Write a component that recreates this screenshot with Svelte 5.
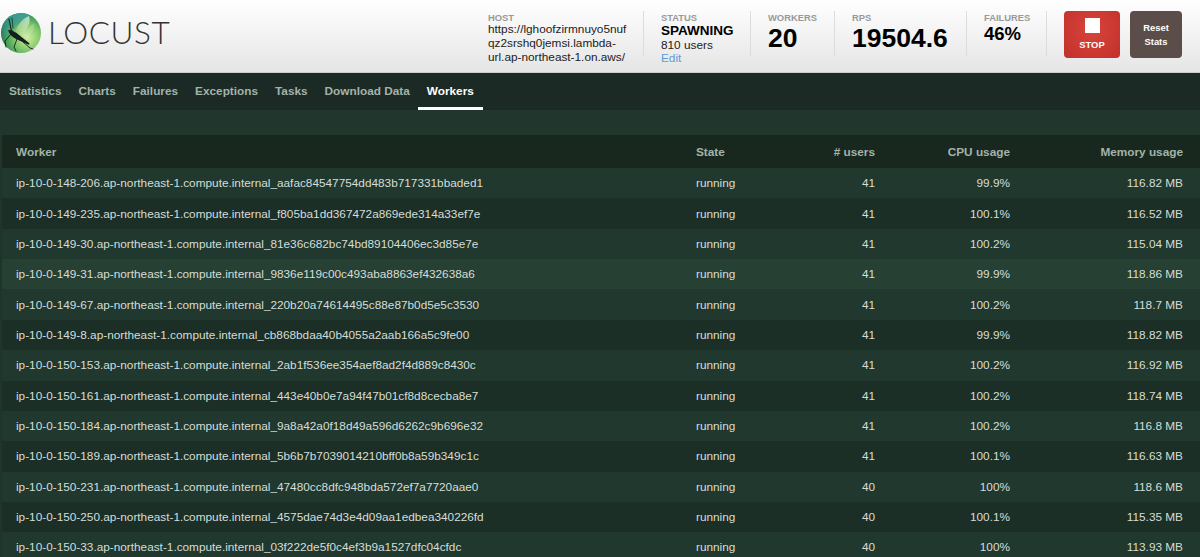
<script>
  const tabs = ["Statistics", "Charts", "Failures", "Exceptions", "Tasks", "Download Data", "Workers"]
  const active = "Workers"

  const workers = [
    ["ip-10-0-148-206.ap-northeast-1.compute.internal_aafac84547754dd483b717331bbaded1", 41, "99.9%", "116.82 MB"],
    ["ip-10-0-149-235.ap-northeast-1.compute.internal_f805ba1dd367472a869ede314a33ef7e", 41, "100.1%", "116.52 MB"],
    ["ip-10-0-149-30.ap-northeast-1.compute.internal_81e36c682bc74bd89104406ec3d85e7e", 41, "100.2%", "115.04 MB"],
    ["ip-10-0-149-31.ap-northeast-1.compute.internal_9836e119c00c493aba8863ef432638a6", 41, "99.9%", "118.86 MB"],
    ["ip-10-0-149-67.ap-northeast-1.compute.internal_220b20a74614495c88e87b0d5e5c3530", 41, "100.2%", "118.7 MB"],
    ["ip-10-0-149-8.ap-northeast-1.compute.internal_cb868bdaa40b4055a2aab166a5c9fe00", 41, "99.9%", "118.82 MB"],
    ["ip-10-0-150-153.ap-northeast-1.compute.internal_2ab1f536ee354aef8ad2f4d889c8430c", 41, "100.2%", "116.92 MB"],
    ["ip-10-0-150-161.ap-northeast-1.compute.internal_443e40b0e7a94f47b01cf8d8cecba8e7", 41, "100.2%", "118.74 MB"],
    ["ip-10-0-150-184.ap-northeast-1.compute.internal_9a8a42a0f18d49a596d6262c9b696e32", 41, "100.2%", "116.8 MB"],
    ["ip-10-0-150-189.ap-northeast-1.compute.internal_5b6b7b7039014210bff0b8a59b349c1c", 41, "100.1%", "116.63 MB"],
    ["ip-10-0-150-231.ap-northeast-1.compute.internal_47480cc8dfc948bda572ef7a7720aae0", 40, "100%", "118.6 MB"],
    ["ip-10-0-150-250.ap-northeast-1.compute.internal_4575dae74d3e4d09aa1edbea340226fd", 40, "100.1%", "115.35 MB"],
    ["ip-10-0-150-33.ap-northeast-1.compute.internal_03f222de5f0c4ef3b9a1527dfc04cfdc", 40, "100%", "113.93 MB"]
  ]
</script>

<div class="page">
  <header class="top">
    <div class="brand">
      <svg class="logo" viewBox="0 0 40 40" width="40" height="40" aria-hidden="true">
        <defs>
          <radialGradient id="orb" cx="0.66" cy="0.62" r="0.68">
            <stop offset="0" stop-color="#cfeea0"/>
            <stop offset="0.45" stop-color="#86c96c"/>
            <stop offset="0.8" stop-color="#3f9a58"/>
            <stop offset="1" stop-color="#1d6448"/>
          </radialGradient>
          <linearGradient id="wing" x1="0.7" y1="0" x2="0.3" y2="1">
            <stop offset="0" stop-color="#fff" stop-opacity="0.6"/>
            <stop offset="1" stop-color="#fff" stop-opacity="0.08"/>
          </linearGradient>
          <linearGradient id="cap" x1="0" y1="0" x2="0" y2="1">
            <stop offset="0" stop-color="#3d9f96"/>
            <stop offset="1" stop-color="#3d9f96" stop-opacity="0"/>
          </linearGradient>
        </defs>
        <circle cx="20" cy="20" r="20" fill="url(#orb)"/>
        <path d="M20 0A20 20 0 0 0 0 20C0 24 1 27 3 30C8 20 16 10 30 3C27 1 24 0 20 0Z" fill="url(#cap)"/>
        <path d="M14 20C16 12 21 6 28 3C30 9 27 17 18 23Z" fill="url(#wing)"/>
        <path d="M19 23C23 18 29 13 33 10C35 16 30 23 22 25Z" fill="#fff" opacity="0.16"/>
        <g fill="none" stroke="#14201a" stroke-linecap="round">
          <path d="M8 6L10 16L12 20" stroke-width="1.100"/>
          <path d="M11 5L12 15" stroke-width="0.700"/>
          <path d="M10 21L4 28L5 34" stroke-width="1"/>
          <path d="M16 26L13 34L15 38" stroke-width="0.900"/>
          <path d="M22 29L29 35L32 36" stroke-width="0.900"/>
        </g>
        <path d="M7 17C11 17 15 19 18 22L28 30C29 31 28 32 27 31.500L15 26C11 24 8 21 7 17Z" fill="#14201a"/>
      </svg>
      <span class="wordmark">LOCUST</span>
    </div>

    <div class="stats">
      <div class="stat host">
        <div class="label">HOST</div>
        <div class="hosturl">https://lghoofzirmnuyo5nuf<br>qz2srshq0jemsi.lambda-<br>url.ap-northeast-1.on.aws/</div>
      </div>
      <div class="stat status">
        <div class="label">STATUS</div>
        <div class="state">SPAWNING</div>
        <div class="users">810 users</div>
        <a class="edit" href="#edit">Edit</a>
      </div>
      <div class="stat workers">
        <div class="label">WORKERS</div>
        <div class="big">20</div>
      </div>
      <div class="stat rps">
        <div class="label">RPS</div>
        <div class="big">19504.6</div>
      </div>
      <div class="stat failures">
        <div class="label">FAILURES</div>
        <div class="mid">46%</div>
      </div>
      <div class="actions">
        <button class="stop"><span class="square"></span>STOP</button>
        <button class="reset">Reset<br>Stats</button>
      </div>
    </div>
  </header>

  <nav class="tabs">
    {#each tabs as tab}
      <a href="#{tab}" class:active={tab === active}>{tab}</a>
    {/each}
  </nav>

  <div class="band"></div>

  <div class="wrap">
    <table>
      <thead>
        <tr>
          <th class="name">Worker</th>
          <th class="state-col">State</th>
          <th class="num users-col"># users</th>
          <th class="num cpu-col">CPU usage</th>
          <th class="num mem-col">Memory usage</th>
        </tr>
      </thead>
      <tbody>
        {#each workers as w, i}
          <tr class:hover={i === 3}>
            <td class="name">{w[0]}</td>
            <td>running</td>
            <td class="num">{w[1]}</td>
            <td class="num">{w[2]}</td>
            <td class="num">{w[3]}</td>
          </tr>
        {/each}
      </tbody>
    </table>
  </div>
</div>

<style>
  :global(body) {
    margin: 0;
    background: #1f342b;
    overflow: hidden;
  }

  .page {
    height: 557px;
    overflow: hidden;
    font-family: "Liberation Sans", Arial, sans-serif;
    background: #1f342b;
  }

  .top {
    height: 72px;
    display: flex;
    justify-content: space-between;
    background: linear-gradient(#ffffff, #e5e5e5);
    border-bottom: 1px solid #c9cdcb;
  }

  .brand {
    display: flex;
    align-items: center;
    padding-left: 1px;
    gap: 7px;
    height: 66px;
  }

  .wordmark {
    font-family: Lato, sans-serif;
    font-weight: 300;
    font-size: 31.500px;
    color: #333;
    letter-spacing: 0.6px;
    line-height: 1;
  }

  .stats {
    display: flex;
    align-items: flex-start;
    padding: 11px 18px 0 0;
  }

  .stat {
    box-sizing: border-box;
    height: 45px;
    margin-right: 17px;
    border-right: 1px solid #dcdcdc;
    color: #000;
  }

  .label {
    font-size: 9.400px;
    line-height: 11px;
    font-weight: 700;
    color: #999;
    margin-top: 1px;
  }

  .host { width: 156px; }
  .status { width: 90px; }
  .workers { width: 67px; }
  .rps { width: 115px; }
  .failures { width: 63px; }

  .hosturl {
    font-size: 11.800px;
    line-height: 14px;
    color: #222;
    margin-top: -1px;
  }

  .state {
    font-size: 13.500px;
    font-weight: 700;
    line-height: 15px;
  }

  .users {
    font-size: 11.800px;
    line-height: 14px;
    color: #222;
  }

  .edit {
    font-size: 11.800px;
    line-height: 14px;
    display: block;
    margin-top: -1px;
    color: #5b9bd5;
    text-decoration: none;
  }

  .big {
    font-size: 26.500px;
    font-weight: 700;
    line-height: 28px;
    margin-top: 1px;
  }

  .mid {
    font-size: 18.500px;
    font-weight: 700;
    line-height: 21px;
  }

  .actions {
    display: flex;
    gap: 10px;
  }

  button {
    border: none;
    border-radius: 4px;
    color: #fff;
    font-family: inherit;
    font-weight: 700;
    font-size: 9.400px;
    height: 47px;
    width: 52px;
    padding: 0;
  }

  .stop {
    background: radial-gradient(circle at 50% 40%, #d9443c, #c0302a);
    width: 56px;
    display: flex;
    flex-direction: column;
    align-items: center;
    padding-top: 7px;
    gap: 6px;
  }

  .square {
    width: 15px;
    height: 15px;
    background: #fff;
  }

  .reset {
    background: #5b4d49;
    line-height: 14px;
  }

  .tabs {
    height: 37px;
    background: #1b2a24;
    display: flex;
    gap: 17px;
    padding-left: 9px;
  }

  .tabs a {
    color: #a3b3aa;
    font-size: 11.800px;
    font-weight: 700;
    text-decoration: none;
    line-height: 36px;
    height: 36px;
  }

  .tabs a.active {
    color: #fff;
    border-bottom: 3px solid #fff;
    padding: 0 9px;
    margin: 0 -9px;
    height: 34px;
  }

  .band {
    height: 25px;
    background: #21362d;
  }

  .wrap {
    padding-left: 2px;
  }

  table {
    width: 100%;
    border-collapse: collapse;
    table-layout: fixed;
    font-size: 11.800px;
    color: #d5ddd8;
  }

  th {
    box-sizing: border-box;
    height: 33px;
    padding: 0;
    background: #19281f;
    color: #a3b3aa;
    font-weight: 700;
    text-align: left;
  }

  td {
    height: 30.360px;
    padding: 0;
  }

  tbody tr:nth-child(odd) {
    background: #21382e;
  }

  tbody tr:nth-child(even) {
    background: #1c2f27;
  }

  tbody tr.hover {
    background: #274034;
  }

  .name { padding-left: 14px; width: 694px; }
  .state-col { width: 95px; }
  .users-col { width: 84px; }
  .cpu-col { width: 135px; }
  .num { text-align: right; }
  th:last-child, td:last-child { padding-right: 17px; }
</style>
